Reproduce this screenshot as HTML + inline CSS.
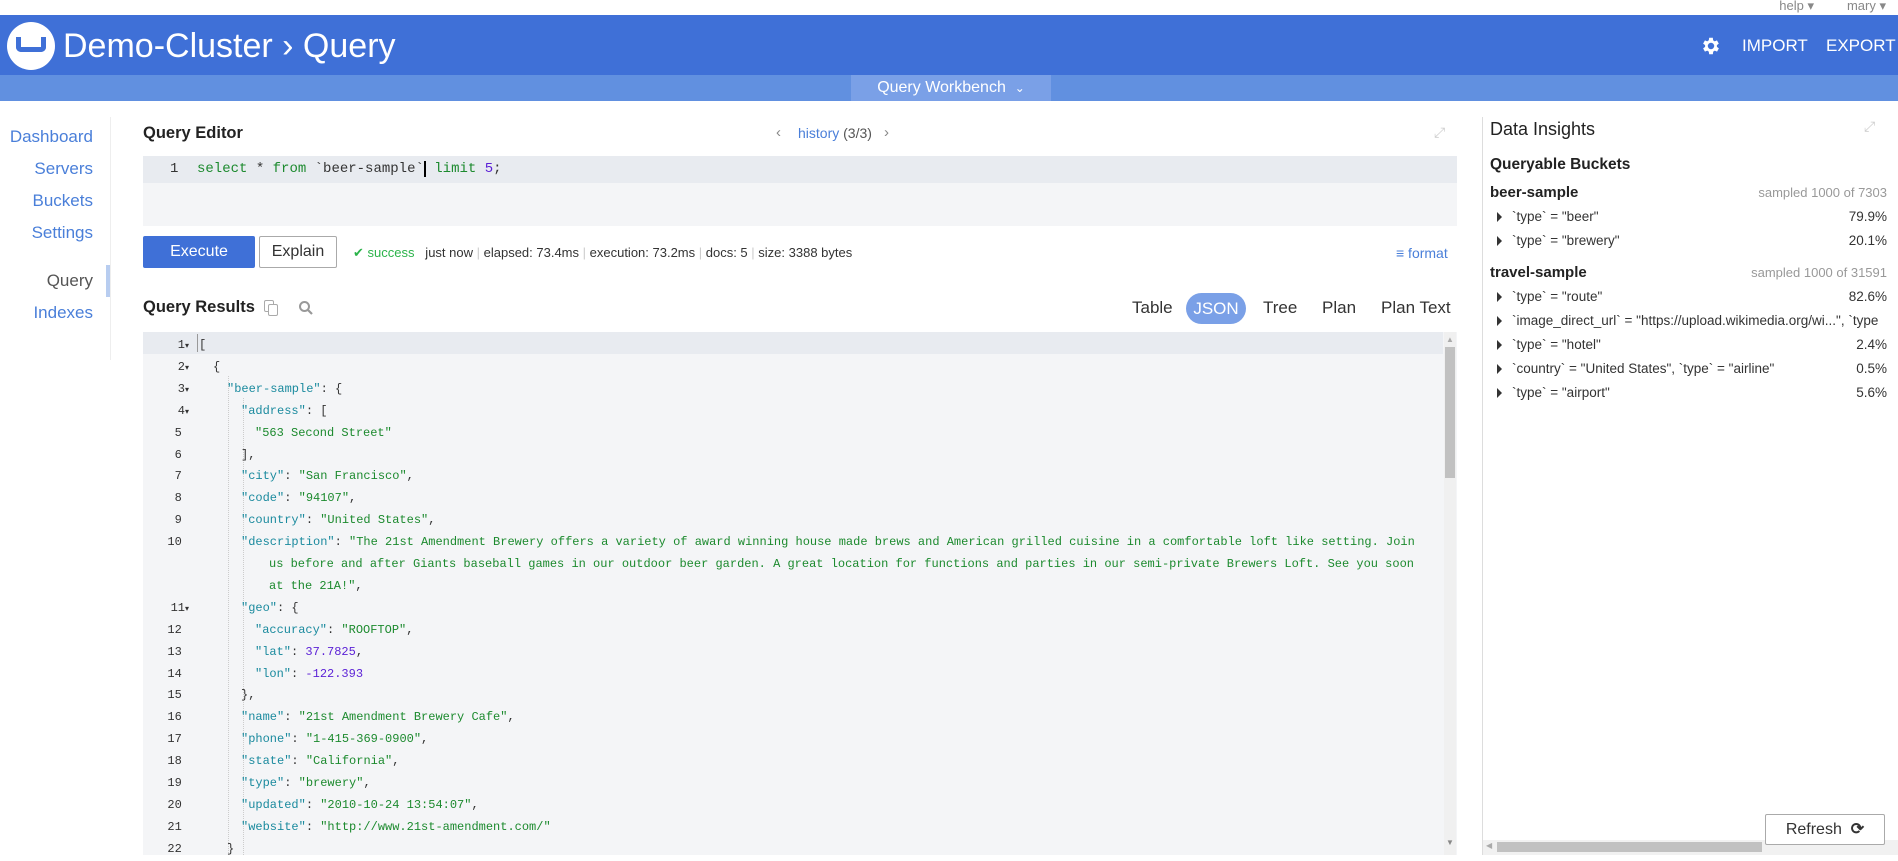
<!DOCTYPE html>
<html><head><meta charset="utf-8"><style>
*{margin:0;padding:0;box-sizing:border-box}
body{width:1898px;height:855px;overflow:hidden;background:#fff;font-family:"Liberation Sans",sans-serif;position:relative;color:#333}
.a{position:absolute;white-space:nowrap}
.hdr{left:0;top:15px;width:1898px;height:60px;background:#3f70d7}
.sub{left:0;top:75px;width:1898px;height:26px;background:#6190e0}
.nav{right:1805px;font-size:17px;color:#4a7fd9;text-align:right}
.mono{font-family:"Liberation Mono",monospace}
.ln{font-family:"Liberation Mono",monospace;font-size:12px;color:#333;width:46px;text-align:right;left:143px}
.cl{font-family:"Liberation Mono",monospace;font-size:12px;color:#333}
.k{color:#1a8a9e}.s{color:#1c8a2e}.n{color:#5a1fd6}
.row{left:1497px;font-size:13.5px;color:#333}
.pc{right:11px;font-size:13.5px;color:#333;text-align:right}
.tri{display:inline-block;width:0;height:0;border-left:5px solid #333;border-top:5px solid transparent;border-bottom:5px solid transparent;margin-right:10px;vertical-align:-1px}
.guide{position:absolute;width:0;border-left:1px dotted #ccc}
</style></head><body>
<div class="a" style="right:84px;top:-2px;font-size:13px;color:#888">help ▾</div>
<div class="a" style="right:12px;top:-2px;font-size:13px;color:#888">mary ▾</div>
<div class="a hdr"></div>
<div class="a" style="left:7px;top:22px;width:48px;height:48px;border-radius:50%;background:#fff"></div>
<div class="a" style="left:16px;top:37px;width:30px;height:15px;border:5px solid #3f70d7;border-top:none;border-radius:0 0 5px 5px"></div>
<div class="a" style="left:22px;top:36px;width:18px;height:7px;background:#fff"></div>
<div class="a" style="left:63px;top:27px;font-size:34px;color:#fff">Demo-Cluster › Query</div>
<svg class="a" style="left:1700px;top:35px" width="22" height="22" viewBox="0 0 24 24"><path fill="#fff" d="M19.4 13a7.5 7.5 0 0 0 0-2l2.1-1.6-2-3.5-2.5 1a7 7 0 0 0-1.7-1L15 3h-4l-.4 2.9a7 7 0 0 0-1.7 1l-2.5-1-2 3.5L6.6 11a7.5 7.5 0 0 0 0 2l-2.2 1.6 2 3.5 2.5-1a7 7 0 0 0 1.7 1L11 21h4l.4-2.9a7 7 0 0 0 1.7-1l2.5 1 2-3.5zM13 15.5a3.5 3.5 0 1 1 0-7 3.5 3.5 0 0 1 0 7z" transform="translate(-1 0)"/></svg>
<div class="a" style="left:1742px;top:36px;font-size:17px;color:#fff">IMPORT</div>
<div class="a" style="left:1826px;top:36px;font-size:17px;color:#fff">EXPORT</div>
<div class="a sub"></div>
<div class="a" style="left:851px;top:75px;width:200px;height:26px;background:#7aa0e7;color:#fff;font-size:16px;line-height:26px;text-align:center">Query Workbench &nbsp;<span style="font-size:12px">⌄</span></div>

<div class="a nav" style="top:127px">Dashboard</div>
<div class="a nav" style="top:159px">Servers</div>
<div class="a nav" style="top:191px">Buckets</div>
<div class="a nav" style="top:223px">Settings</div>
<div class="a nav" style="top:271px;color:#555">Query</div>
<div class="a nav" style="top:303px">Indexes</div>
<div class="a" style="left:110px;top:117px;width:1px;height:243px;background:#eee"></div>
<div class="a" style="left:106px;top:265px;width:4px;height:32px;background:#b8cdf0"></div>

<div class="a" style="left:143px;top:124px;font-size:16.5px;font-weight:bold;color:#222">Query Editor</div>
<div class="a" style="left:776px;top:124px;font-size:15px;color:#888">‹</div>
<div class="a" style="left:798px;top:125px;font-size:14px;color:#4a7fd9">history <span style="color:#555">(3/3)</span></div>
<div class="a" style="left:884px;top:124px;font-size:15px;color:#888">›</div>
<div class="a" style="left:1434px;top:124px;font-size:14px;color:#ccc">⤢</div>

<div class="a" style="left:143px;top:156px;width:1314px;height:70px;background:#f4f5f7"></div>
<div class="a" style="left:143px;top:156px;width:1314px;height:27px;background:#e8ebf0"></div>
<div class="a mono" style="left:170px;top:161px;font-size:14px;color:#333">1</div>
<div class="a mono" style="left:197px;top:161px;font-size:14px;color:#333"><span class="s">select</span> * <span class="s">from</span> `beer-sample`<span style="border-left:2px solid #000"></span> <span class="s">limit</span> <span class="n">5</span>;</div>

<div class="a" style="left:143px;top:236px;width:112px;height:32px;background:#3f70d7;border-radius:2px;color:#fff;font-size:16px;line-height:32px;text-align:center">Execute</div>
<div class="a" style="left:259px;top:236px;width:78px;height:32px;border:1px solid #aaa;border-radius:2px;font-size:16px;line-height:30px;text-align:center;color:#333">Explain</div>
<div class="a" style="left:353px;top:245px;font-size:13px;color:#333"><span style="color:#2bb34a">✔ success</span> &nbsp; just now <span style="color:#ccc">|</span> elapsed: 73.4ms <span style="color:#ccc">|</span> execution: 73.2ms <span style="color:#ccc">|</span> docs: 5 <span style="color:#ccc">|</span> size: 3388 bytes</div>
<div class="a" style="left:1396px;top:245px;font-size:14px;color:#4a7fd9">≡ format</div>

<div class="a" style="left:143px;top:298px;font-size:16.5px;font-weight:bold;color:#222">Query Results</div>
<div class="a" style="left:264px;top:300px;width:10px;height:12px;border:1.5px solid #aaa;border-radius:2px"></div>
<div class="a" style="left:268px;top:304px;width:10px;height:12px;border:1.5px solid #aaa;border-radius:2px;background:#fff"></div>
<svg class="a" style="left:298px;top:300px" width="16" height="16" viewBox="0 0 16 16"><circle cx="6.5" cy="6.5" r="4.5" fill="none" stroke="#999" stroke-width="2"/><path d="M10 10l4 4" stroke="#999" stroke-width="2.2"/></svg>
<div class="a" style="left:1132px;top:298px;font-size:17px;color:#333">Table</div>
<div class="a" style="left:1186px;top:293px;width:60px;height:31px;border-radius:16px;background:#7aa0e7;color:#fff;font-size:17px;line-height:31px;text-align:center">JSON</div>
<div class="a" style="left:1263px;top:298px;font-size:17px;color:#333">Tree</div>
<div class="a" style="left:1322px;top:298px;font-size:17px;color:#333">Plan</div>
<div class="a" style="left:1381px;top:298px;font-size:17px;color:#333">Plan Text</div>

<div class="a" style="left:143px;top:332px;width:1314px;height:523px;background:#f4f5f7"></div>
<div class="a" style="left:143px;top:332px;width:1300px;height:22px;background:#e8ebf0"></div>
<div class="a" style="left:197px;top:334px;width:1px;height:18px;background:#999"></div>
<div class="a" style="left:1444px;top:332px;width:12px;height:523px;background:#f0f0f0"></div>
<div class="a" style="left:1445px;top:347px;width:10px;height:131px;background:#c1c1c1"></div>
<div class="a" style="left:1446px;top:335px;font-size:8px;color:#aaa">▲</div>
<div class="a" style="left:1446px;top:838px;font-size:8px;color:#888">▼</div>
<div class="guide" style="left:228px;top:376px;height:479px"></div>
<div class="guide" style="left:243px;top:398px;height:457px"></div>

<div style="position:absolute;left:0;top:335px;line-height:21.9px">
<div class="a ln" style="top:0">1<span style="font-size:8px">▾</span></div>
<div class="a ln" style="top:21.9px">2<span style="font-size:8px">▾</span></div>
<div class="a ln" style="top:43.8px">3<span style="font-size:8px">▾</span></div>
<div class="a ln" style="top:65.7px">4<span style="font-size:8px">▾</span></div>
<div class="a ln" style="top:87.6px">5&nbsp;</div>
<div class="a ln" style="top:109.5px">6&nbsp;</div>
<div class="a ln" style="top:131.4px">7&nbsp;</div>
<div class="a ln" style="top:153.3px">8&nbsp;</div>
<div class="a ln" style="top:175.2px">9&nbsp;</div>
<div class="a ln" style="top:197.1px">10&nbsp;</div>
<div class="a ln" style="top:262.8px">11<span style="font-size:8px">▾</span></div>
<div class="a ln" style="top:284.7px">12&nbsp;</div>
<div class="a ln" style="top:306.6px">13&nbsp;</div>
<div class="a ln" style="top:328.5px">14&nbsp;</div>
<div class="a ln" style="top:350.4px">15&nbsp;</div>
<div class="a ln" style="top:372.3px">16&nbsp;</div>
<div class="a ln" style="top:394.2px">17&nbsp;</div>
<div class="a ln" style="top:416.1px">18&nbsp;</div>
<div class="a ln" style="top:438px">19&nbsp;</div>
<div class="a ln" style="top:459.9px">20&nbsp;</div>
<div class="a ln" style="top:481.8px">21&nbsp;</div>
<div class="a ln" style="top:503.7px">22&nbsp;</div>

<div class="a cl" style="left:199px;top:0">[</div>
<div class="a cl" style="left:213px;top:21.9px">{</div>
<div class="a cl" style="left:227px;top:43.8px"><span class="k">"beer-sample"</span>: {</div>
<div class="a cl" style="left:241px;top:65.7px"><span class="k">"address"</span>: [</div>
<div class="a cl" style="left:255px;top:87.6px"><span class="s">"563 Second Street"</span></div>
<div class="a cl" style="left:241px;top:109.5px">],</div>
<div class="a cl" style="left:241px;top:131.4px"><span class="k">"city"</span>: <span class="s">"San Francisco"</span>,</div>
<div class="a cl" style="left:241px;top:153.3px"><span class="k">"code"</span>: <span class="s">"94107"</span>,</div>
<div class="a cl" style="left:241px;top:175.2px"><span class="k">"country"</span>: <span class="s">"United States"</span>,</div>
<div class="a cl" style="left:241px;top:197.1px"><span class="k">"description"</span>: <span class="s">"The 21st Amendment Brewery offers a variety of award winning house made brews and American grilled cuisine in a comfortable loft like setting. Join</span></div>
<div class="a cl s" style="left:269px;top:219px">us before and after Giants baseball games in our outdoor beer garden. A great location for functions and parties in our semi-private Brewers Loft. See you soon</div>
<div class="a cl" style="left:269px;top:240.9px"><span class="s">at the 21A!"</span>,</div>
<div class="a cl" style="left:241px;top:262.8px"><span class="k">"geo"</span>: {</div>
<div class="a cl" style="left:255px;top:284.7px"><span class="k">"accuracy"</span>: <span class="s">"ROOFTOP"</span>,</div>
<div class="a cl" style="left:255px;top:306.6px"><span class="k">"lat"</span>: <span class="n">37.7825</span>,</div>
<div class="a cl" style="left:255px;top:328.5px"><span class="k">"lon"</span>: <span class="n">-122.393</span></div>
<div class="a cl" style="left:241px;top:350.4px">},</div>
<div class="a cl" style="left:241px;top:372.3px"><span class="k">"name"</span>: <span class="s">"21st Amendment Brewery Cafe"</span>,</div>
<div class="a cl" style="left:241px;top:394.2px"><span class="k">"phone"</span>: <span class="s">"1-415-369-0900"</span>,</div>
<div class="a cl" style="left:241px;top:416.1px"><span class="k">"state"</span>: <span class="s">"California"</span>,</div>
<div class="a cl" style="left:241px;top:438px"><span class="k">"type"</span>: <span class="s">"brewery"</span>,</div>
<div class="a cl" style="left:241px;top:459.9px"><span class="k">"updated"</span>: <span class="s">"2010-10-24 13:54:07"</span>,</div>
<div class="a cl" style="left:241px;top:481.8px"><span class="k">"website"</span>: <span class="s">"http://www.21st-amendment.com/"</span></div>
<div class="a cl" style="left:227px;top:503.7px">}</div>
</div>

<div class="a" style="left:1482px;top:117px;width:1px;height:738px;background:#ddd"></div>
<div class="a" style="left:1490px;top:119px;font-size:18px;color:#222">Data Insights</div>
<div class="a" style="left:1864px;top:118px;font-size:14px;color:#ccc">⤢</div>
<div class="a" style="left:1490px;top:156px;font-size:15.5px;font-weight:bold;color:#222">Queryable Buckets</div>
<div class="a" style="left:1490px;top:184px;font-size:15px;font-weight:bold;color:#222">beer-sample</div>
<div class="a" style="right:11px;top:185px;font-size:13px;color:#999">sampled 1000 of 7303</div>
<div class="a row" style="top:209px"><span class="tri"></span>`type` = "beer"</div><div class="a pc" style="top:209px">79.9%</div>
<div class="a row" style="top:233px"><span class="tri"></span>`type` = "brewery"</div><div class="a pc" style="top:233px">20.1%</div>
<div class="a" style="left:1490px;top:264px;font-size:15px;font-weight:bold;color:#222">travel-sample</div>
<div class="a" style="right:11px;top:265px;font-size:13px;color:#999">sampled 1000 of 31591</div>
<div class="a row" style="top:289px"><span class="tri"></span>`type` = "route"</div><div class="a pc" style="top:289px">82.6%</div>
<div class="a row" style="top:313px"><span class="tri"></span>`image_direct_url` = "https://upload.wikimedia.org/wi...", `type</div>
<div class="a row" style="top:337px"><span class="tri"></span>`type` = "hotel"</div><div class="a pc" style="top:337px">2.4%</div>
<div class="a row" style="top:361px"><span class="tri"></span>`country` = "United States", `type` = "airline"</div><div class="a pc" style="top:361px">0.5%</div>
<div class="a row" style="top:385px"><span class="tri"></span>`type` = "airport"</div><div class="a pc" style="top:385px">5.6%</div>

<div class="a" style="left:1483px;top:840px;width:415px;height:15px;background:#f1f1f1"></div>
<div class="a" style="left:1497px;top:842px;width:265px;height:10px;background:#c1c1c1"></div>
<div class="a" style="left:1486px;top:841px;font-size:8px;color:#aaa">◀</div>
<div class="a" style="left:1765px;top:814px;width:120px;height:31px;background:#fff;border:1px solid #aaa;border-radius:2px;font-size:16px;line-height:29px;text-align:center;color:#333">Refresh &nbsp;<b>⟳</b></div>
</body></html>
